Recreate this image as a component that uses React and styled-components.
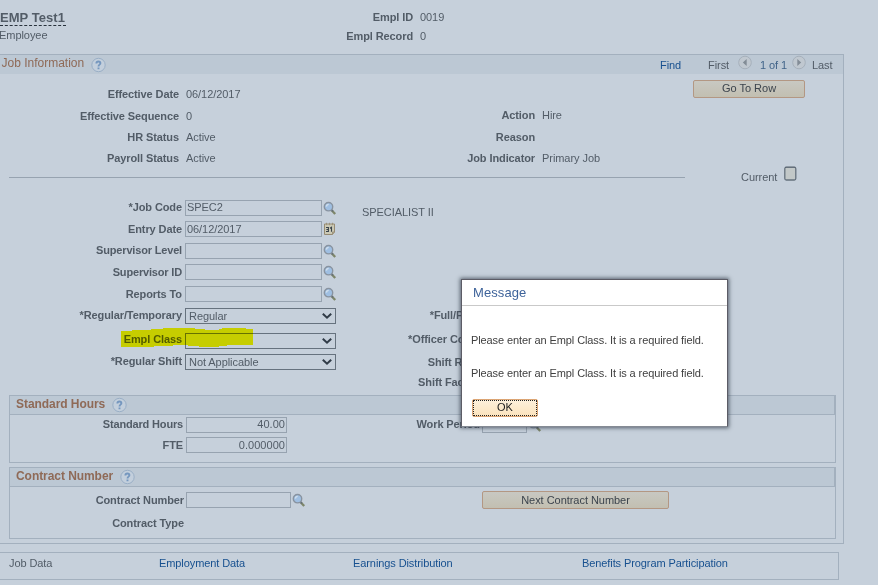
import React from "react";
import styled, { createGlobalStyle } from "styled-components";

const GlobalStyle = createGlobalStyle`
  * { box-sizing: border-box; }
  html, body { margin: 0; padding: 0; overflow: hidden; background: #c6d0db; }
  body { font: 11px/16px "Liberation Sans", Arial, sans-serif; color: #525c67; letter-spacing: -0.06px; }
  svg { display: block; flex: none; }
`;

const Page = styled.div`
  position: relative;
  width: 878px;
  height: 585px;
  overflow: hidden;
  display: flex;
  flex-direction: column;
`;

const Header = styled.header`
  display: flex;
  height: 54px;
  flex: none;
`;
const Identity = styled.div`
  width: 340px;
  padding-top: 9px;
`;
const EmployeeName = styled.h1`
  margin: 0;
  width: 66px;
  height: 17px;
  font-size: 13px;
  line-height: 17px;
  font-weight: bold;
  letter-spacing: 0.05px;
  white-space: nowrap;
  border-bottom: 1px dashed #28323c;
`;
const Role = styled.div`
  margin: 1px 0 0 -1px;
`;
const IdList = styled.div`
  padding-top: 9px;
`;

const Row = styled.div`
  display: flex;
  align-items: center;
  height: ${(p) => p.$h || 16}px;
  margin-top: ${(p) => p.$mt || 0}px;
`;
const Label = styled.span`
  width: ${(p) => p.$w}px;
  margin-right: ${(p) => p.$gap ?? 7}px;
  padding-bottom: ${(p) => p.$lift || 0}px;
  flex: none;
  text-align: right;
  font-weight: bold;
  letter-spacing: ${(p) => p.$ls ?? -0.1}px;
  white-space: nowrap;
  color: #525c67;
`;
const Value = styled.span`
  white-space: nowrap;
`;

const Panel = styled.section`
  width: 844px;
  height: 490px;
  flex: none;
  border: 1px solid #a3b0be;
  border-left: none;
`;
const PanelHeader = styled.div`
  display: flex;
  align-items: center;
  height: 19px;
  padding-left: 1.5px;
  background: #bcc8d4;
`;
const PanelTitle = styled.h2`
  margin: 0;
  width: 89px;
  padding-bottom: 2px;
  font-size: 12px;
  line-height: 17px;
  font-weight: normal;
  letter-spacing: 0;
  color: #8f6a57;
  white-space: nowrap;
`;
const Pager = styled.nav`
  display: flex;
  height: 18px;
  margin-left: 554.5px;
  padding-top: 1px;
`;
const PagerItem = styled.span`
  width: ${(p) => p.$w}px;
  flex: none;
  white-space: nowrap;
  color: ${(p) => p.$color || "#525c67"};
`;
const PagerIcon = styled.span`
  width: ${(p) => p.$w}px;
  margin-top: -2px;
  margin-left: -1px;
  flex: none;
`;

const Summary = styled.div`
  display: flex;
  height: 113px;
`;
const SummaryMain = styled.div`
  width: 685px;
  flex: none;
`;
const SummaryColumns = styled.div`
  display: flex;
  height: 103px;
`;
const SummaryColumn = styled.div`
  width: ${(p) => p.$w}px;
  padding-top: ${(p) => p.$top}px;
`;
const Rule = styled.div`
  height: 1px;
  margin-left: 9px;
  background: #97a3b0;
`;
const SummaryAside = styled.div`
  padding: 6px 0 0 8px;
`;
const Button = styled.button`
  display: block;
  width: ${(p) => p.$w}px;
  height: 18px;
  margin: 0;
  padding: ${(p) => (p.$low ? "1px 0 0" : "0 0 1px")};
  font: 11px/15px "Liberation Sans", Arial, sans-serif;
  letter-spacing: ${(p) => p.$ls || 0}px;
  color: #3c444d;
  border: 1px solid #b39783;
  border-radius: 2px;
  background: linear-gradient(#c8c8c2, #c2bfb1);
`;
const CurrentRow = styled.label`
  display: flex;
  align-items: flex-end;
  height: 19px;
  margin: 68px 0 0 48px;
`;
const CurrentText = styled.span`
  width: 43px;
`;
const CheckSlot = styled.span`
  padding-bottom: 4px;
`;

const Form = styled.div`
  display: flex;
  height: 208px;
  padding-top: 13px;
`;
const FormLeft = styled.div`
  width: 362px;
  flex: none;
`;
const FormRight = styled.div`
  padding-top: 4px;
`;
const Input = styled.div`
  width: ${(p) => p.$w || 137}px;
  height: 16px;
  flex: none;
  padding: ${(p) => (p.$low ? 1 : 0)}px 1px 0;
  line-height: 13px;
  border: 1px solid #97a3b0;
  text-align: ${(p) => p.$align || "left"};
`;
const NumberInput = styled(Input)`
  width: 101px;
  text-align: right;
  letter-spacing: 0.05px;
`;
const SelectBox = styled.div`
  display: flex;
  align-items: center;
  justify-content: space-between;
  width: 151px;
  height: 16px;
  padding: 0 3px 1px 3px;
  line-height: 14px;
  border: 1px solid #66727e;
`;
const SelectText = styled.span`
  padding-top: 1px;
`;
const IconSlot = styled.span`
  margin-left: 1px;
`;

const Group = styled.section`
  width: 827px;
  height: ${(p) => p.$h}px;
  margin: 0 0 ${(p) => p.$mb || 0}px 9px;
  border: 1px solid #a3b0be;
`;
const GroupHeader = styled.div`
  display: flex;
  align-items: center;
  height: 19px;
  padding-left: ${(p) => p.$pl}px;
  background: #bcc8d4;
  border-right: 1px solid #a3b0be;
  border-bottom: 1px solid #a3b0be;
`;
const GroupTitle = styled.h3`
  margin: 0;
  width: ${(p) => p.$w}px;
  font-size: 12px;
  line-height: 17px;
  padding-bottom: 1px;
  white-space: nowrap;
  color: #8f6a57;
`;

const TabBar = styled.nav`
  display: flex;
  width: 839px;
  height: 28px;
  margin-top: 8px;
  flex: none;
  padding: 2px 0 0 9px;
  border: 1px solid #a3b0be;
  border-left: none;
`;
const Tab = styled.span`
  width: ${(p) => p.$w}px;
  flex: none;
  white-space: nowrap;
  letter-spacing: -0.09px;
  color: ${(p) => (p.$link ? "#17508f" : "#525c67")};
`;

const Marker = styled.svg`
  position: absolute;
  left: 121px;
  top: 328px;
  mix-blend-mode: multiply;
`;
const Dialog = styled.div`
  position: absolute;
  left: 461px;
  top: 279px;
  width: 267px;
  height: 148px;
  background: #fff;
  border: 1px solid #5c5c66;
  border-bottom-color: #858b94;
  box-shadow: 0 0 4px 1px rgba(40, 50, 62, 0.7);
  color: #404040;
`;
const DialogTitle = styled.div`
  height: 26px;
  padding-left: 11px;
  font-size: 13px;
  line-height: 26px;
  letter-spacing: 0.1px;
  color: #3e639a;
  border-bottom: 1px solid #c9c9c9;
`;
const DialogText = styled.p`
  margin: ${(p) => p.$mt}px 0 0 9px;
  letter-spacing: -0.1px;
  white-space: nowrap;
`;
const OkButton = styled.button`
  display: block;
  width: 66px;
  height: 18px;
  margin: 18px 0 0 10px;
  padding: 0 0 1px;
  font: 11px/13px "Liberation Sans", Arial, sans-serif;
  color: #222;
  border: 1px solid #dca574;
  border-radius: 2px;
  background: linear-gradient(#fdf0dc, #fbe3bd);
  outline: 1px dotted #222;
  outline-offset: -2px;
`;

const HelpIcon = () => (
  <svg width="15" height="16" viewBox="0 0 15 16">
    <circle cx="7.5" cy="8" r="6.7" fill="#c3cfdc" stroke="#9aafc6" />
    <path d="M5.4 6.4c0-1.3.8-1.9 2-1.9s2 .7 2 1.7c0 1.4-1.9 1.5-1.9 3.2M7.5 10.5v1.7" fill="none" stroke="#7597bf" strokeWidth="1.9" />
  </svg>
);
const LookupIcon = () => (
  <svg width="14" height="14" viewBox="0 0 14 14">
    <path d="M8.6 9.2l3.6 3.8" stroke="#7e866a" strokeWidth="2.3" />
    <path d="M8.2 8.6l1.8 1.8" stroke="#667078" strokeWidth="1.6" />
    <circle cx="5.5" cy="5.7" r="4.2" fill="#9fbfe2" stroke="#8893a0" strokeWidth="1.4" />
    <path d="M3.4 5.6A2.3 2.3 0 0 1 5.7 3.4" fill="none" stroke="#cfdeed" strokeWidth="1.3" />
  </svg>
);
const CalendarIcon = () => (
  <svg width="13" height="14" viewBox="0 0 13 14">
    <path d="M1.5 2h10v8l-2 2.5h-8z" fill="#cbc9b5" stroke="#968b73" />
    <path d="M11.5 10h-2v2.5" fill="#b1a78d" stroke="#968b73" strokeWidth=".8" />
    <path d="M3.5 .8v2.4M6.5 .8v2.4M9.5 .8v2.4" stroke="#9d937b" />
    <path d="M3 5.5h2.4v4H3M3.4 7.5h2M7 6.3l1.5-1v4.5" fill="none" stroke="#39434b" strokeWidth="1.1" />
  </svg>
);
const ArrowIcon = ({ next }) => (
  <svg width="14" height="15" viewBox="0 0 14 15">
    <circle cx="7" cy="7.5" r="6.3" fill="#c0c8d0" stroke="#a6b0bb" />
    <path d={next ? "M5.3 4v7l3.9-3.5z" : "M8.7 4v7L4.8 7.5z"} fill="#828c96" />
  </svg>
);
const Chevron = () => (
  <svg width="10" height="8" viewBox="0 0 10 8">
    <path d="M.8 1.7L5 5.7l4.2-4" fill="none" stroke="#303b47" strokeWidth="2" />
  </svg>
);
const Checkbox = () => (
  <svg width="13" height="15" viewBox="0 0 13 15">
    <rect x=".8" y="1.2" width="11" height="12.8" rx="1.5" fill="#c2c8c8" stroke="#65717d" strokeWidth="1.3" />
    <path d="M1.5 1.3h10" stroke="#47525d" strokeDasharray="1 1" />
  </svg>
);

const lookupRows = [
  { label: "*Job Code", value: "SPEC2", mt: 0, lift: 2 },
  { label: "Entry Date", value: "06/12/2017", mt: 5, lift: 0, low: true, calendar: true },
  { label: "Supervisor Level", value: "", mt: 6, lift: 2, ls: -0.17 },
  { label: "Supervisor ID", value: "", mt: 5, lift: 0, ls: -0.17 },
  { label: "Reports To", value: "", mt: 6, lift: 0 },
];
const selectRows = [
  { label: "*Regular/Temporary", value: "Regular", mt: 6, lift: 2 },
  { label: "Empl Class", value: "", mt: 9, lift: 4 },
  { label: "*Regular Shift", value: "Not Applicable", mt: 5, lift: 2 },
];

export default function App() {
  return (
    <Page>
      <GlobalStyle />
      <Header>
        <Identity>
          <EmployeeName>EMP Test1</EmployeeName>
          <Role>Employee</Role>
        </Identity>
        <IdList>
          <Row><Label $w={73}>Empl ID</Label><Value>0019</Value></Row>
          <Row $mt={3}><Label $w={73}>Empl Record</Label><Value>0</Value></Row>
        </IdList>
      </Header>

      <Panel>
        <PanelHeader>
          <PanelTitle>Job Information</PanelTitle>
          <HelpIcon />
          <Pager>
            <PagerItem $w={48} $color="#17508f">Find</PagerItem>
            <PagerItem $w={31}>First</PagerItem>
            <PagerIcon $w={22}><ArrowIcon /></PagerIcon>
            <PagerItem $w={33} $color="#416489">1 of 1</PagerItem>
            <PagerIcon $w={20}><ArrowIcon next /></PagerIcon>
            <PagerItem $w={24}>Last</PagerItem>
          </Pager>
        </PanelHeader>

        <Summary>
          <SummaryMain>
            <SummaryColumns>
              <SummaryColumn $w={361} $top={9}>
                <Row $h={22}><Label $w={179}>Effective Date</Label><Value>06/12/2017</Value></Row>
                <Row $h={22}><Label $w={179}>Effective Sequence</Label><Value>0</Value></Row>
                <Row $h={20}><Label $w={179}>HR Status</Label><Value>Active</Value></Row>
                <Row $h={22}><Label $w={179}>Payroll Status</Label><Value>Active</Value></Row>
              </SummaryColumn>
              <SummaryColumn $w={324} $top={30}>
                <Row $h={22}><Label $w={174}>Action</Label><Value>Hire</Value></Row>
                <Row $h={22}><Label $w={174}>Reason</Label></Row>
                <Row $h={20}><Label $w={174}>Job Indicator</Label><Value>Primary Job</Value></Row>
              </SummaryColumn>
            </SummaryColumns>
            <Rule />
          </SummaryMain>
          <SummaryAside>
            <Button $w={112}>Go To Row</Button>
            <CurrentRow>
              <CurrentText>Current</CurrentText>
              <CheckSlot><Checkbox /></CheckSlot>
            </CurrentRow>
          </SummaryAside>
        </Summary>

        <Form>
          <FormLeft>
            {lookupRows.map((r) => (
              <Row key={r.label} $mt={r.mt}>
                <Label $w={182} $gap={3} $lift={r.lift} $ls={r.ls}>{r.label}</Label>
                <Input $low={r.low}>{r.value}</Input>
                <IconSlot>{r.calendar ? <CalendarIcon /> : <LookupIcon />}</IconSlot>
              </Row>
            ))}
            {selectRows.map((r) => (
              <Row key={r.label} $mt={r.mt}>
                <Label $w={182} $gap={3} $lift={r.lift}>{r.label}</Label>
                <SelectBox><SelectText>{r.value}</SelectText><Chevron /></SelectBox>
              </Row>
            ))}
          </FormLeft>
          <FormRight>
            <Row><Value>SPECIALIST II</Value></Row>
            <Row $mt={87}><Label $w={115}>*Full/Part</Label></Row>
            <Row $mt={8}><Label $w={115}>*Officer Code</Label></Row>
            <Row $mt={7}><Label $w={116}>Shift Rate</Label></Row>
            <Row $mt={4}><Label $w={116}>Shift Factor</Label></Row>
          </FormRight>
        </Form>

        <Group $h={68} $mb={4}>
          <GroupHeader $pl={6}>
            <GroupTitle $w={96}>Standard Hours</GroupTitle>
            <HelpIcon />
          </GroupHeader>
          <Row $mt={2}>
            <Label $w={173} $gap={3} $lift={2} $ls={-0.17}>Standard Hours</Label>
            <NumberInput>40.00</NumberInput>
            <Label $w={193} $gap={2} $lift={2}>Work Period</Label>
            <Input $w={45} />
            <IconSlot><LookupIcon /></IconSlot>
          </Row>
          <Row $mt={4}>
            <Label $w={173} $gap={3}>FTE</Label>
            <NumberInput $low>0.000000</NumberInput>
          </Row>
        </Group>

        <Group $h={72}>
          <GroupHeader $pl={6}>
            <GroupTitle $w={104}>Contract Number</GroupTitle>
            <HelpIcon />
          </GroupHeader>
          <Row $mt={4} $h={18}>
            <Label $w={174} $gap={2}>Contract Number</Label>
            <Input $w={105} />
            <IconSlot><LookupIcon /></IconSlot>
            <Label $w={170} $gap={6} />
            <Button $w={187} $low $ls={-0.04}>Next Contract Number</Button>
          </Row>
          <Row $mt={6}><Label $w={174}>Contract Type</Label></Row>
        </Group>
      </Panel>

      <TabBar>
        <Tab $w={150}>Job Data</Tab>
        <Tab $w={194} $link>Employment Data</Tab>
        <Tab $w={229} $link>Earnings Distribution</Tab>
        <Tab $w={160} $link>Benefits Program Participation</Tab>
      </TabBar>

      <Marker width="132" height="20" viewBox="0 0 132 20">
        <path d="M0 3h11V2h19V1h12V0h32v1h10v1h14V1h3V0h24v1h7v16h-26v1h-8v1H78v-1H67v-1H52v1H33v1H0z" fill="#fffc00" />
      </Marker>

      <Dialog role="dialog">
        <DialogTitle>Message</DialogTitle>
        <DialogText $mt={26}>Please enter an Empl Class. It is a required field.</DialogText>
        <DialogText $mt={17}>Please enter an Empl Class. It is a required field.</DialogText>
        <OkButton>OK</OkButton>
      </Dialog>
    </Page>
  );
}
